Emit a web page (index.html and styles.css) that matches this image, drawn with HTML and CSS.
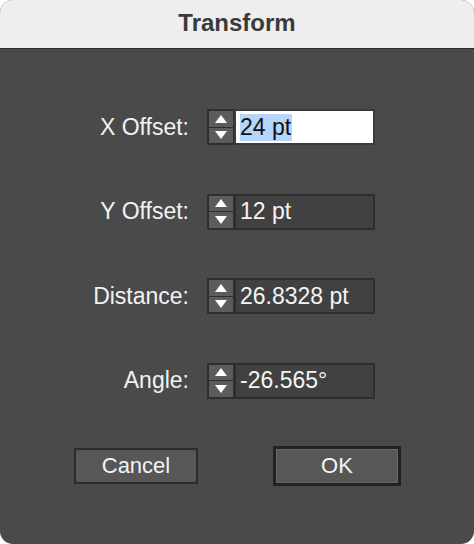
FILE: index.html
```html
<!DOCTYPE html>
<html>
<head>
<meta charset="utf-8">
<link rel="stylesheet" href="styles.css">
</head>
<body>
<div class="window">
  <div class="titlebar">Transform</div>
  <div class="content">
    <div class="form">
      <div class="row">
        <label class="label">X Offset:</label>
        <div class="spinner">
          <div class="arrow up"><svg width="12" height="8" viewBox="0 0 12 8"><polygon points="6,0 12,8 0,8" fill="#fff"/></svg></div>
          <div class="arrow down"><svg width="12" height="8" viewBox="0 0 12 8"><polygon points="0,0 12,0 6,8" fill="#fff"/></svg></div>
        </div>
        <div class="field active"><span class="sel">24 pt</span></div>
      </div>
      <div class="row">
        <label class="label">Y Offset:</label>
        <div class="spinner">
          <div class="arrow up"><svg width="12" height="8" viewBox="0 0 12 8"><polygon points="6,0 12,8 0,8" fill="#fff"/></svg></div>
          <div class="arrow down"><svg width="12" height="8" viewBox="0 0 12 8"><polygon points="0,0 12,0 6,8" fill="#fff"/></svg></div>
        </div>
        <div class="field">12 pt</div>
      </div>
      <div class="row">
        <label class="label">Distance:</label>
        <div class="spinner">
          <div class="arrow up"><svg width="12" height="8" viewBox="0 0 12 8"><polygon points="6,0 12,8 0,8" fill="#fff"/></svg></div>
          <div class="arrow down"><svg width="12" height="8" viewBox="0 0 12 8"><polygon points="0,0 12,0 6,8" fill="#fff"/></svg></div>
        </div>
        <div class="field">26.8328 pt</div>
      </div>
      <div class="row">
        <label class="label">Angle:</label>
        <div class="spinner">
          <div class="arrow up"><svg width="12" height="8" viewBox="0 0 12 8"><polygon points="6,0 12,8 0,8" fill="#fff"/></svg></div>
          <div class="arrow down"><svg width="12" height="8" viewBox="0 0 12 8"><polygon points="0,0 12,0 6,8" fill="#fff"/></svg></div>
        </div>
        <div class="field">-26.565°</div>
      </div>
    </div>
    <div class="buttons">
      <button class="btn cancel">Cancel</button>
      <button class="btn ok">OK</button>
    </div>
  </div>
</div>
</body>
</html>
```
FILE: styles.css
```css
html, body {
  margin: 0;
  padding: 0;
  background: #ffffff;
}
.window {
  width: 474px;
  height: 544px;
  border-radius: 13px;
  overflow: hidden;
  background: #4a4a4a;
  font-family: "Liberation Sans", Arial, sans-serif;
  display: flex;
  flex-direction: column;
}
.titlebar {
  height: 49px;
  background: #eeeeee;
  border-bottom: 1px solid #2c2c2c;
  color: #3a3a3a;
  font-weight: bold;
  font-size: 24px;
  display: flex;
  align-items: center;
  justify-content: center;
  padding-bottom: 2px;
  box-sizing: border-box;
}
.content {
  flex: 1;
  display: flex;
  flex-direction: column;
  padding-top: 60px;
}
.form {
  display: flex;
  flex-direction: column;
  gap: 48.5px;
}
.row {
  display: grid;
  grid-template-columns: 189px 45px 141px;
  height: 36px;
  align-items: center;
}
.label {
  grid-column: 1;
  color: #f2f2f2;
  font-size: 23px;
  text-align: right;
}
.spinner {
  grid-column: 2;
  margin-left: 18px;
  width: 27px;
  height: 36px;
  box-sizing: border-box;
  border: 1px solid #2e2e2e;
  border-right: none;
  display: flex;
  flex-direction: column;
  background: #2e2e2e;
  gap: 1px;
}
.arrow {
  flex: 1;
  background: #5c5c5c;
  display: flex;
  align-items: center;
  justify-content: center;
  margin: 0 1px;
}
.arrow.up { margin-top: 1px; }
.arrow.down { margin-bottom: 1px; }
.field {
  grid-column: 3;
  height: 36px;
  box-sizing: border-box;
  border: 2px solid #2e2e2e;
  background: #414141;
  color: #f4f4f4;
  font-size: 23px;
  display: flex;
  align-items: center;
  padding-left: 4px;
}
.field.active {
  background: #ffffff;
  border-color: #3a3a3a;
  color: #111111;
}
.sel {
  background: #b5d5fb;
  line-height: 27px;
  padding-right: 1px;
}
.buttons {
  display: flex;
  margin-top: 47px;
  padding-left: 74px;
  align-items: center;
}
.btn {
  font-family: "Liberation Sans", Arial, sans-serif;
  font-size: 22px;
  color: #f4f4f4;
  background: #575757;
  box-sizing: border-box;
  padding: 0;
}
.cancel {
  width: 124px;
  height: 36px;
  border: 2px solid #2c2c2c;
}
.ok {
  margin-left: 75px;
  width: 128px;
  height: 40px;
  border: 3px solid #222222;
  box-shadow: inset 0 0 0 1px #666;
}
```
